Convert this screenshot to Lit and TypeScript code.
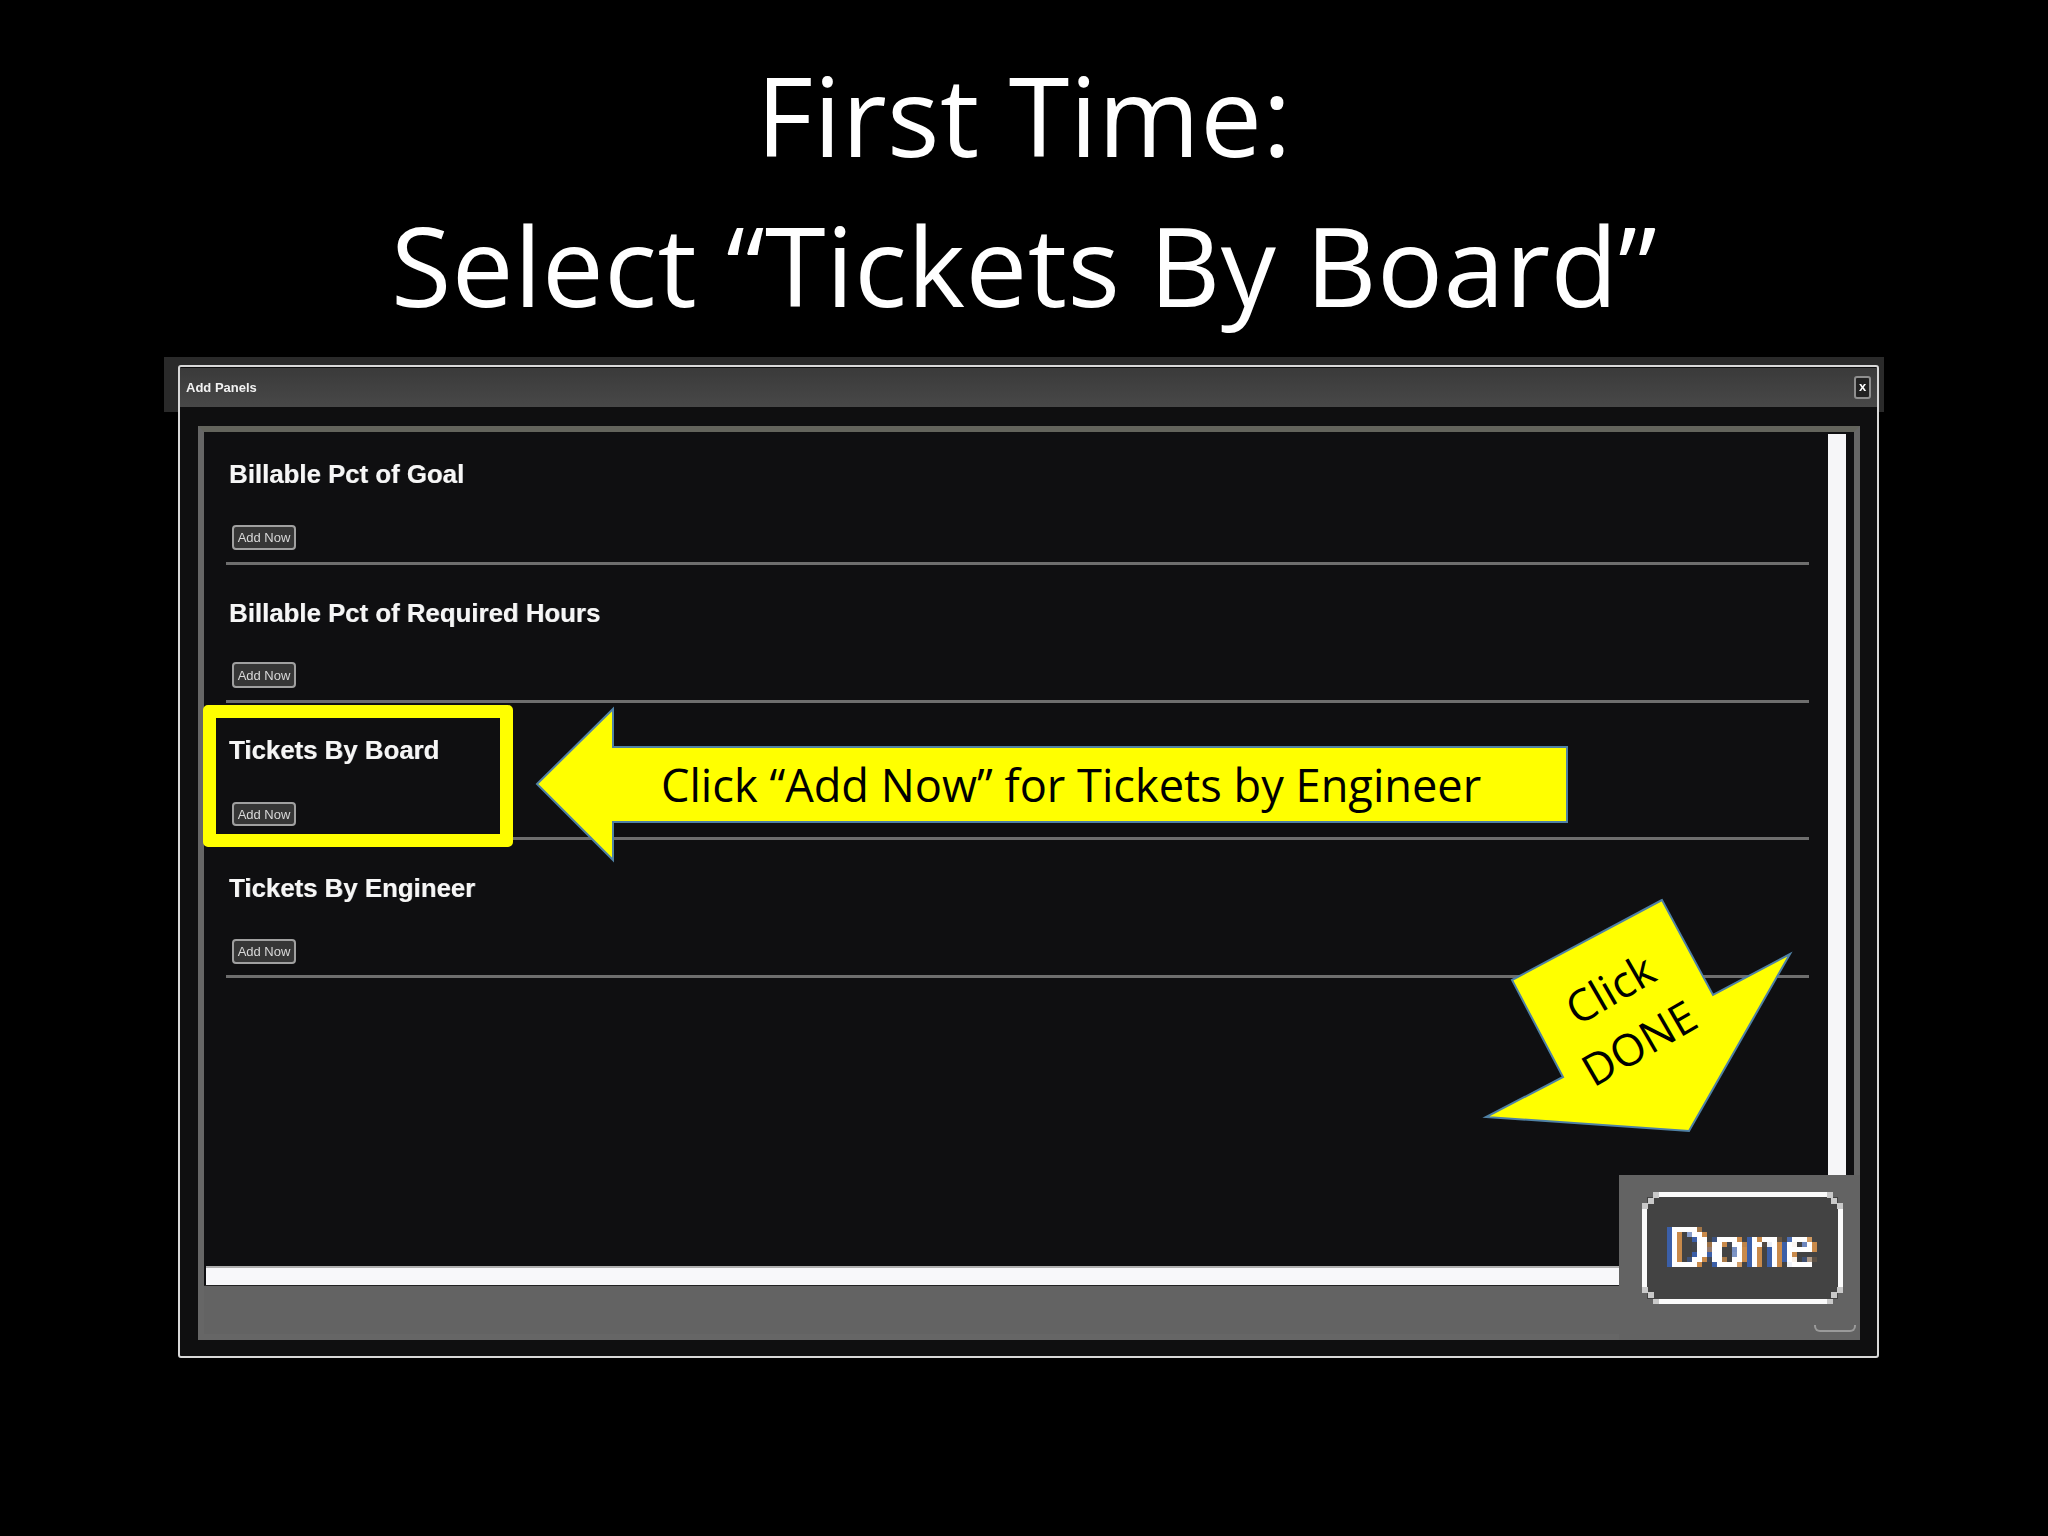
import { LitElement, html, css, svg } from "lit";
import { customElement } from "lit/decorators.js";

const rows = [
  { name: "Billable Pct of Goal", pad: 26, gap: 36, btn: 25, end: 12 },
  { name: "Billable Pct of Required Hours", pad: 33, gap: 34, btn: 26, end: 12 },
  { name: "Tickets By Board", pad: 32, gap: 37, btn: 24, end: 11 },
  { name: "Tickets By Engineer", pad: 33, gap: 36, btn: 25, end: 11 },
];

@customElement("app-root")
export class AppRoot extends LitElement {
  static styles = css`
    :host {
      display: block;
      position: relative;
      width: 2048px;
      height: 1536px;
      background: #000;
      overflow: hidden;
      font-family: "Liberation Sans", Arial, sans-serif;
    }
    .title {
      margin: 0;
      padding-top: 39px;
      height: 315px;
      box-sizing: border-box;
      text-align: center;
      font-family: "Open Sans", sans-serif;
      font-weight: 400;
      font-size: 110px;
      letter-spacing: 0.45px;
      line-height: 150px;
      color: #fff;
    }
    .window-wrap {
      position: relative;
      margin: 50px 0 0 178px;
      width: 1701px;
      height: 993px;
    }
    .backdrop {
      position: absolute;
      left: -14px;
      top: -8px;
      width: 1720px;
      height: 55px;
      background: #2a2a2a;
    }
    .window {
      position: relative;
      box-sizing: border-box;
      height: 100%;
      border: 2px solid #d8d8d8;
      border-radius: 3px;
      background: #0f0f10;
      display: flex;
      flex-direction: column;
    }
    .bar {
      height: 39px;
      margin-top: 1px;
      background: linear-gradient(#3a3a3a, #484848);
      display: flex;
      align-items: center;
      justify-content: space-between;
      padding: 0 6px;
      color: #f2f2f2;
      font-size: 13px;
      font-weight: 700;
      filter: blur(0.6px);
    }
    .close {
      width: 17px;
      height: 23px;
      box-sizing: border-box;
      border: 2px solid #8f8f8f;
      border-radius: 3px;
      background: #222;
      color: #fff;
      font-size: 13px;
      line-height: 17px;
      text-align: center;
      font-weight: 700;
    }
    .panel {
      margin: 19px 17px 0 18px;
      height: 914px;
      box-sizing: border-box;
      border: 6px solid #666;
      border-top-color: #63645c;
      background: #636363;
      display: flex;
      flex-direction: column;
      position: relative;
    }
    .scrollarea {
      height: 854px;
      flex: none;
      background: #0f0f11;
      border-bottom: 1px solid #222;
      box-sizing: border-box;
      display: flex;
      flex-direction: column;
    }
    .viewport {
      flex: 1;
      display: flex;
      padding-right: 8px;
      min-height: 0;
    }
    .list {
      flex: 1;
      padding: 1px 19px 0 22px;
      filter: blur(0.6px);
    }
    .row {
      display: flex;
      flex-direction: column;
      align-items: flex-start;
      border-bottom: 3px solid #6e6e6e;
    }
    .row h3 {
      margin: 0 0 0 3px;
      height: 30px;
      font-size: 25.8px;
      line-height: 30px;
      font-weight: 700;
      color: #f6f6f6;
      white-space: nowrap;
      text-shadow: 0.6px 0 0 rgba(255, 255, 255, 0.55);
    }
    .add {
      margin-left: 6px;
      width: 64px;
      box-sizing: border-box;
      border: 2px solid #a0a0a0;
      border-radius: 4px;
      background: #363636;
      color: #d8d8d8;
      font-size: 13px;
      line-height: 1;
      display: flex;
      align-items: center;
      justify-content: center;
      white-space: nowrap;
    }
    .vscroll {
      width: 18px;
      margin-top: 2px;
      background: #f6f6f8;
      flex: none;
    }
    .hscroll {
      height: 19px;
      margin-left: 2px;
      flex: none;
      background: #f8f8fa;
      border-top: 2px solid #b0b0b0;
      box-sizing: border-box;
    }
    .done-patch {
      position: absolute;
      right: -6px;
      bottom: -6px;
      width: 241px;
      height: 165px;
      background: #636363;
    }
    .done {
      position: absolute;
      left: 23px;
      top: 17px;
      width: 201px;
      height: 112px;
    }
    .done text {
      font-family: "Liberation Sans", Arial, sans-serif;
      font-size: 60px;
      font-weight: 700;
      fill: #fff;
    }
    .grip {
      position: absolute;
      left: 195px;
      bottom: 8px;
      width: 42px;
      height: 7px;
      box-sizing: border-box;
      border: 2px solid #9a9a9a;
      border-top: none;
      border-radius: 0 0 6px 6px;
    }
    .highlight {
      position: absolute;
      left: 203px;
      top: 705px;
      width: 310px;
      height: 142px;
      box-sizing: border-box;
      border: 13px solid #ffff00;
      border-radius: 5px;
    }
    .notes {
      position: absolute;
      left: 0;
      top: 0;
      width: 2048px;
      height: 1536px;
      pointer-events: none;
    }
    .notes polygon {
      fill: #ffff00;
      stroke: #4f81a5;
      stroke-width: 2;
      stroke-linejoin: miter;
    }
    .notes text {
      font-family: "Open Sans", sans-serif;
      fill: #000;
    }
    .big {
      font-size: 45.2px;
    }
    .small {
      font-size: 44px;
    }
  `;

  private doneButton() {
    const w = 201;
    const h = 112;
    const corners = [
      [6, 6], [11, 0], [0, 11],
      [w - 12, 6], [w - 16, 0], [w - 6, 11],
      [6, h - 12], [11, h - 5], [0, h - 17],
      [w - 12, h - 12], [w - 16, h - 5], [w - 6, h - 17],
    ];
    return svg`
      <defs>
        <filter id="px" filterUnits="userSpaceOnUse" x="0" y="0" width="${w}" height="${h}" color-interpolation-filters="sRGB">
          <feOffset in="SourceAlpha" dx="-3" dy="0" result="lo"></feOffset>
          <feFlood flood-color="#3b5fa8" result="blue"></feFlood>
          <feComposite in="blue" in2="lo" operator="in" result="left"></feComposite>
          <feOffset in="SourceAlpha" dx="3" dy="0" result="ro"></feOffset>
          <feFlood flood-color="#c98a4a" result="orange"></feFlood>
          <feComposite in="orange" in2="ro" operator="in" result="right"></feComposite>
          <feMerge result="fringed">
            <feMergeNode in="left"></feMergeNode>
            <feMergeNode in="right"></feMergeNode>
            <feMergeNode in="SourceGraphic"></feMergeNode>
          </feMerge>
          <feFlood x="2" y="2" width="1" height="1" flood-color="#000"></feFlood>
          <feComposite x="0" y="0" width="5" height="5"></feComposite>
          <feTile result="grid"></feTile>
          <feComposite in="fringed" in2="grid" operator="in"></feComposite>
          <feMorphology operator="dilate" radius="2"></feMorphology>
        </filter>
      </defs>
      <rect x="5" y="5" width="${w - 10}" height="${h - 10}" fill="#434343"></rect>
      <text x="24" y="76" filter="url(#px)">Done</text>
      <rect x="16" y="0" width="${w - 32}" height="5" fill="#fbfbfb"></rect>
      <rect x="16" y="${h - 5}" width="${w - 32}" height="5" fill="#fbfbfb"></rect>
      <rect x="0" y="16" width="5" height="${h - 32}" fill="#fbfbfb"></rect>
      <rect x="${w - 5}" y="16" width="5" height="${h - 32}" fill="#fbfbfb"></rect>
      ${corners.map(([x, y]) => svg`<rect x="${x}" y="${y}" width="6" height="6" fill="#c9c9c9"></rect>`)}
    `;
  }

  render() {
    return html`
      <h1 class="title">First Time:<br />Select “Tickets By Board”</h1>
      <div class="window-wrap">
        <div class="backdrop"></div>
        <div class="window">
          <div class="bar">
            <span>Add Panels</span>
            <span class="close">x</span>
          </div>
          <div class="panel">
            <div class="scrollarea">
              <div class="viewport">
                <div class="list">
                  ${rows.map(
                    (r) => html`
                      <div class="row" style="padding-top:${r.pad}px;padding-bottom:${r.end}px">
                        <h3>${r.name}</h3>
                        <div class="add" style="margin-top:${r.gap}px;height:${r.btn}px">Add Now</div>
                      </div>
                    `
                  )}
                </div>
                <div class="vscroll"></div>
              </div>
              <div class="hscroll"></div>
            </div>
            <div class="done-patch">
              <svg class="done" viewBox="0 0 201 112">${this.doneButton()}</svg>
              <div class="grip"></div>
            </div>
          </div>
        </div>
      </div>
      <div class="highlight"></div>
      <svg class="notes" viewBox="0 0 2048 1536">
        ${svg`
          <polygon points="537,784 613,709 613,747 1567,747 1567,822 613,822 613,860"></polygon>
          <text class="big" x="661" y="802">Click “Add Now” for Tickets by Engineer</text>
          <polygon points="1662,900 1512,980 1563,1077 1486,1117 1689,1131 1790,954 1713,995"></polygon>
          <text class="small" text-anchor="middle" transform="translate(1618,1003) rotate(-30)">Click</text>
          <text class="small" text-anchor="middle" transform="translate(1647,1057) rotate(-30)">DONE</text>
        `}
      </svg>
    `;
  }
}
